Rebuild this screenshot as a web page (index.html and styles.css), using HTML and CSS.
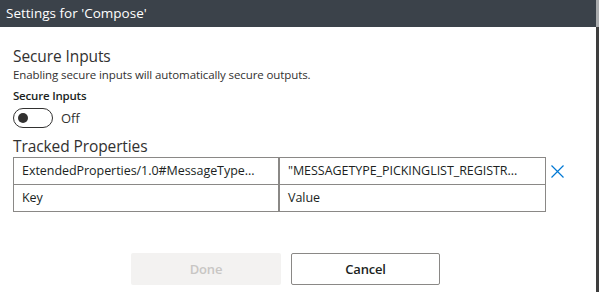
FILE: index.html
```html
<!DOCTYPE html>
<html>
<head>
<meta charset="utf-8">
<link rel="stylesheet" href="styles.css">
</head>
<body>
<div class="frame">
  <div class="dialog">
    <div class="titlebar">Settings for 'Compose'</div>
    <div class="content">
      <div class="section-title">Secure Inputs</div>
      <div class="desc">Enabling secure inputs will automatically secure outputs.</div>
      <div class="label">Secure Inputs</div>
      <div class="toggle-row">
        <span class="toggle"><span class="knob"></span></span>
        <span class="toggle-text">Off</span>
      </div>
      <div class="section-title tracked">Tracked Properties</div>
      <div class="props">
        <div class="grid">
          <div class="cell">ExtendedProperties/1.0#MessageType...</div>
          <div class="cell">"MESSAGETYPE_PICKINGLIST_REGISTR...</div>
          <div class="cell">Key</div>
          <div class="cell">Value</div>
        </div>
        <div class="remove">
          <svg width="13" height="13" viewBox="0 0 13 13"><path d="M0.5 0.5 L12.5 12.5 M12.5 0.5 L0.5 12.5" stroke="#0078d4" stroke-width="1.2" fill="none"/></svg>
        </div>
      </div>
      <div class="buttons">
        <button class="btn done">Done</button>
        <button class="btn cancel">Cancel</button>
      </div>
    </div>
  </div>
  <div class="edge"></div>
</div>
</body>
</html>
```
FILE: styles.css
```css
html, body { margin: 0; padding: 0; background: #fff; }
body { font-family: "Open Sans", "Noto Sans", sans-serif; color: #323130; }
.frame { display: flex; width: 599px; height: 292px; overflow: hidden; }
.dialog { flex: 1; display: flex; flex-direction: column; }
.edge { width: 3px; background: linear-gradient(to bottom, #a9abad 0, #a9abad 27px, #3e3e3e 27px); }
.titlebar { height: 27px; background: #3b424a; color: #fff; font-size: 13.5px; line-height: 27px; padding-left: 6px; }
.content { padding: 19px 0 0 13px; display: flex; flex-direction: column; }
.section-title { font-size: 15.5px; line-height: 21px; letter-spacing: -0.1px; }
.desc { font-size: 11.5px; line-height: 15px; letter-spacing: -0.1px; }
.label { font-size: 11.5px; font-weight: 600; line-height: 16px; margin-top: 6px; letter-spacing: -0.2px; color: #201f1e; }
.toggle-row { display: flex; align-items: center; gap: 8px; margin-top: 4px; height: 20px; }
.toggle { box-sizing: border-box; width: 40px; height: 20px; border: 1px solid #323130; border-radius: 10px; display: flex; align-items: center; padding-left: 4px; }
.knob { width: 10px; height: 10px; border-radius: 50%; background: #323130; }
.toggle-text { font-size: 13px; }
.tracked { margin-top: 8px; line-height: 21px; }
.props { display: flex; align-items: flex-start; }
.grid { display: grid; grid-template-columns: 266px 266px; border-top: 1px solid #8a8886; border-left: 1px solid #8a8886; }
.cell { box-sizing: border-box; height: 27px; line-height: 26px; padding-left: 8px; font-size: 12.5px; color: #201f1e; border-right: 1px solid #8a8886; border-bottom: 1px solid #8a8886; letter-spacing: -0.05px; white-space: nowrap; overflow: hidden; }
.cell:nth-child(odd) { border-right: 2px solid #8a8886; }
.remove { margin-left: 5px; padding-top: 8px; display: flex; }
.buttons { display: flex; gap: 10px; margin-top: 41px; padding-left: 118px; }
.btn { box-sizing: border-box; width: 150px; height: 32px; border-radius: 2px; font-family: inherit; font-size: 13px; font-weight: 600; letter-spacing: -0.2px; }
.done { background: #f3f2f1; color: #c8c6c4; border: none; }
.cancel { background: #fff; color: #201f1e; border: 1px solid #8a8886; width: 149px; }
```
